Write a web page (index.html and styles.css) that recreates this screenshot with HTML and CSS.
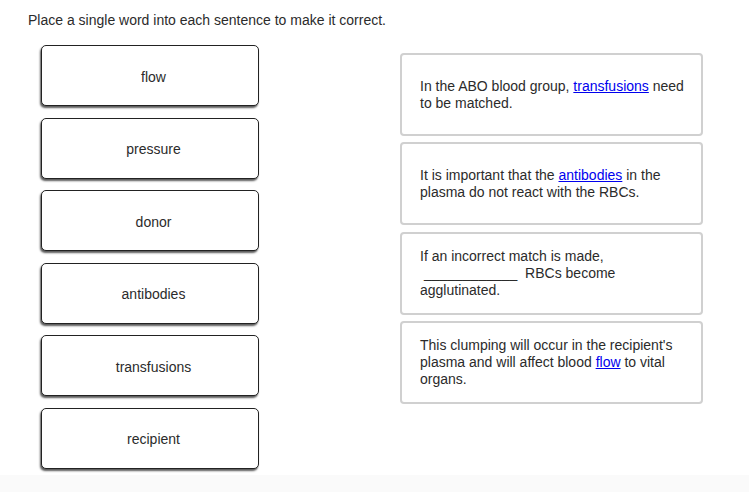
FILE: index.html
```html
<!DOCTYPE html>
<html>
<head>
<meta charset="utf-8">
<link rel="stylesheet" href="styles.css">
</head>
<body>
<div class="page">
  <p class="prompt">Place a single word into each sentence to make it correct.</p>
  <div class="columns">
    <div class="words">
      <div class="word">flow</div>
      <div class="word">pressure</div>
      <div class="word">donor</div>
      <div class="word">antibodies</div>
      <div class="word">transfusions</div>
      <div class="word">recipient</div>
    </div>
    <div class="sentences">
      <div class="sentence"><p>In the ABO blood group, <a href="#">transfusions</a> need to be matched.</p></div>
      <div class="sentence"><p>It is important that the <a href="#">antibodies</a> in the plasma do not react with the RBCs.</p></div>
      <div class="sentence"><p>If an incorrect match is made, <span class="blank">&nbsp;____________&nbsp;</span> RBCs become agglutinated.</p></div>
      <div class="sentence"><p>This clumping will occur in the recipient's plasma and will affect blood <a href="#">flow</a> to vital organs.</p></div>
    </div>
  </div>
</div>
<div class="footer"></div>
</body>
</html>
```
FILE: styles.css
```css
html, body {
  margin: 0;
  padding: 0;
}
body {
  background: #fafafa;
  font-family: "Liberation Sans", Arial, sans-serif;
  font-size: 14px;
  line-height: 17px;
  color: #2b2b2b;
}
.page {
  background: #fff;
  height: 475px;
  padding: 12px 0 0 28px;
  box-sizing: border-box;
}
.prompt {
  margin: 0;
}
.columns {
  display: flex;
  margin-top: 16px;
}
.words {
  display: flex;
  flex-direction: column;
  gap: 11.6px;
  margin-left: 13px;
  width: 218px;
}
.word {
  height: 61px;
  box-sizing: border-box;
  border: 1px solid #222;
  border-radius: 5px;
  box-shadow: -1px 2px 2px rgba(0, 0, 0, 0.65);
  display: flex;
  align-items: center;
  justify-content: center;
  padding: 3px 0 0 7px;
  background: #fff;
}
.sentences {
  display: flex;
  flex-direction: column;
  gap: 6.3px;
  margin-left: 141px;
  margin-top: 8px;
  width: 303px;
}
.sentence {
  height: 83px;
  box-sizing: border-box;
  border: 2px solid #d0d0d0;
  border-radius: 4px;
  display: flex;
  align-items: center;
  padding: 0 14px 0 18px;
}
.sentence p {
  margin: 0;
}
.sentence a {
  color: #0000ee;
  text-decoration: underline;
}
.blank {
  white-space: nowrap;
}
.footer {
  height: 17px;
}
```
